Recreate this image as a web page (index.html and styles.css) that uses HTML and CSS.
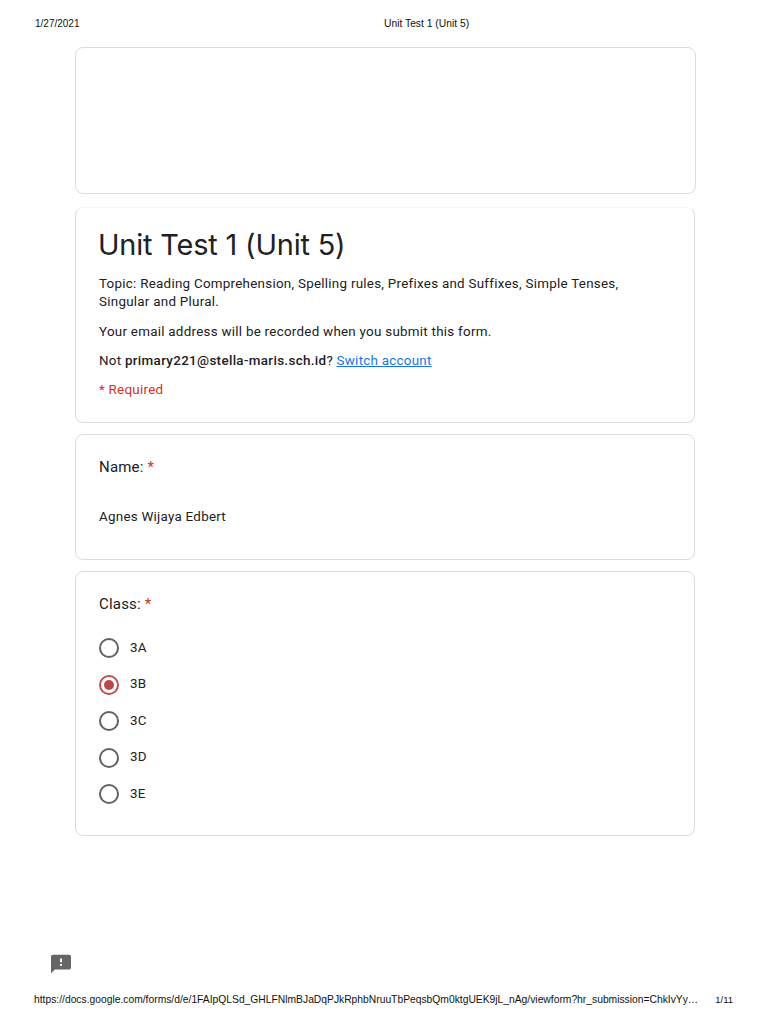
FILE: index.html
```html
<!DOCTYPE html>
<html lang="en">
<head>
<meta charset="utf-8">
<title>Unit Test 1 (Unit 5)</title>
<link rel="stylesheet" href="styles.css">
</head>
<body>
<header class="print-head">
  <span class="head-date">1/27/2021</span>
  <span class="head-title">Unit Test 1 (Unit 5)</span>
</header>
<main class="form">
  <div class="card banner"></div>
  <section class="card intro">
    <h1 class="title">Unit Test 1 (Unit 5)</h1>
    <p class="desc">Topic: Reading Comprehension, Spelling rules, Prefixes and Suffixes, Simple Tenses, Singular and Plural.</p>
    <p class="line email">Your email address will be recorded when you submit this form.</p>
    <p class="line account">Not <b>primary221@stella-maris.sch.id</b>? <a href="#" class="link">Switch account</a></p>
    <p class="line required">* Required</p>
  </section>
  <section class="card question name-card">
    <div class="q-label">Name: <span class="star">*</span></div>
    <div class="answer">Agnes Wijaya Edbert</div>
  </section>
  <section class="card question class-card">
    <div class="q-label">Class: <span class="star">*</span></div>
    <div class="options">
      <div class="option"><span class="radio"></span><span class="opt-text">3A</span></div>
      <div class="option"><span class="radio on"></span><span class="opt-text">3B</span></div>
      <div class="option"><span class="radio"></span><span class="opt-text">3C</span></div>
      <div class="option"><span class="radio"></span><span class="opt-text">3D</span></div>
      <div class="option"><span class="radio"></span><span class="opt-text">3E</span></div>
    </div>
  </section>
</main>
<svg class="feedback" viewBox="0 0 24 24" preserveAspectRatio="none" width="24" height="22" aria-hidden="true"><path fill="#666" d="M20 2H4c-1.100 0-2 .9-2 2v18l4-4h14c1.100 0 2-.9 2-2V4c0-1.100-.9-2-2-2zm-7 12h-2v-2h2v2zm0-4h-2V6h2v4z"/></svg>
<footer class="print-foot">
  <span class="url">https://docs.google.com/forms/d/e/1FAIpQLSd_GHLFNlmBJaDqPJkRphbNruuTbPeqsbQm0ktgUEK9jL_nAg/viewform?hr_submission=ChkIvYy…</span>
  <span class="page">1/11</span>
</footer>
</body>
</html>
```
FILE: styles.css
```css
html, body { margin: 0; padding: 0; background: #fff; }
body {
  width: 768px;
  height: 1024px;
  overflow: hidden;
  position: relative;
  font-family: Roboto, "Liberation Sans", sans-serif;
  color: #202124;
}
.print-head {
  display: flex;
  padding: 17px 35px 0;
  height: 29px;
  box-sizing: border-box;
  font: 10.300px/13px "Liberation Sans", sans-serif;
  color: #111;
}
.head-date { width: 349px; font-size: 10px; }
.form {
  display: flex;
  flex-direction: column;
  align-items: flex-start;
  padding: 18px 0 0 75px;
}
.card {
  box-sizing: border-box;
  width: 620px;
  background: #fff;
  border: 1px solid #dadce0;
  border-radius: 8px;
}
.banner { width: 621px; height: 147px; margin-bottom: 13px; }
.intro {
  height: 216px;
  padding: 15px 23px 0;
  border-top-color: #f5f5f5;
  margin-bottom: 11px;
  font-size: 13.400px;
  letter-spacing: .26px;
}
.title {
  margin: 0 0 8px -1px;
  font: 400 28.900px/44px Inter, "Open Sans", sans-serif;
  letter-spacing: -.17px;
  color: #202124;
}
.desc { margin: 0 0 12px; line-height: 18px; width: 560px; }
.line { margin: 0; line-height: 18px; }
.email { margin-bottom: 11px; }
.account { margin-bottom: 11px; }
.account b { font-weight: 500; letter-spacing: .33px; }
.link { color: #1a73e8; }
.required { color: #d93025; }
.question { padding: 0 23px; }
.name-card { height: 126px; margin-bottom: 11px; padding-top: 22px; }
.class-card { height: 265px; padding-top: 22px; }
.q-label { font-size: 15px; line-height: 20px; letter-spacing: .2px; }
.star { color: #d93025; }
.answer { margin-top: 30px; font-size: 13.400px; line-height: 20px; letter-spacing: .25px; }
.options { display: flex; flex-direction: column; gap: 16.500px; margin-top: 24px; }
.option {
  display: flex;
  align-items: center;
  gap: 11px;
  height: 20px;
  font-size: 13.400px;
  letter-spacing: .3px;
}
.opt-text { padding-bottom: 2px; }
.radio {
  box-sizing: border-box;
  width: 20px;
  height: 20px;
  border: 2px solid #5f6368;
  border-radius: 50%;
  display: flex;
  align-items: center;
  justify-content: center;
}
.radio.on { border-color: #c0504d; }
.radio.on::after {
  content: "";
  width: 10px;
  height: 10px;
  border-radius: 50%;
  background: #b9484a;
}
.feedback { position: absolute; left: 49px; top: 953px; }
.print-foot {
  position: absolute;
  left: 34px;
  right: 35px;
  top: 993px;
  display: flex;
  justify-content: space-between;
  font: 10.300px/13px "Liberation Sans", sans-serif;
  color: #111;
}
.url { white-space: nowrap; }
.page { font-size: 9.500px; }
```
